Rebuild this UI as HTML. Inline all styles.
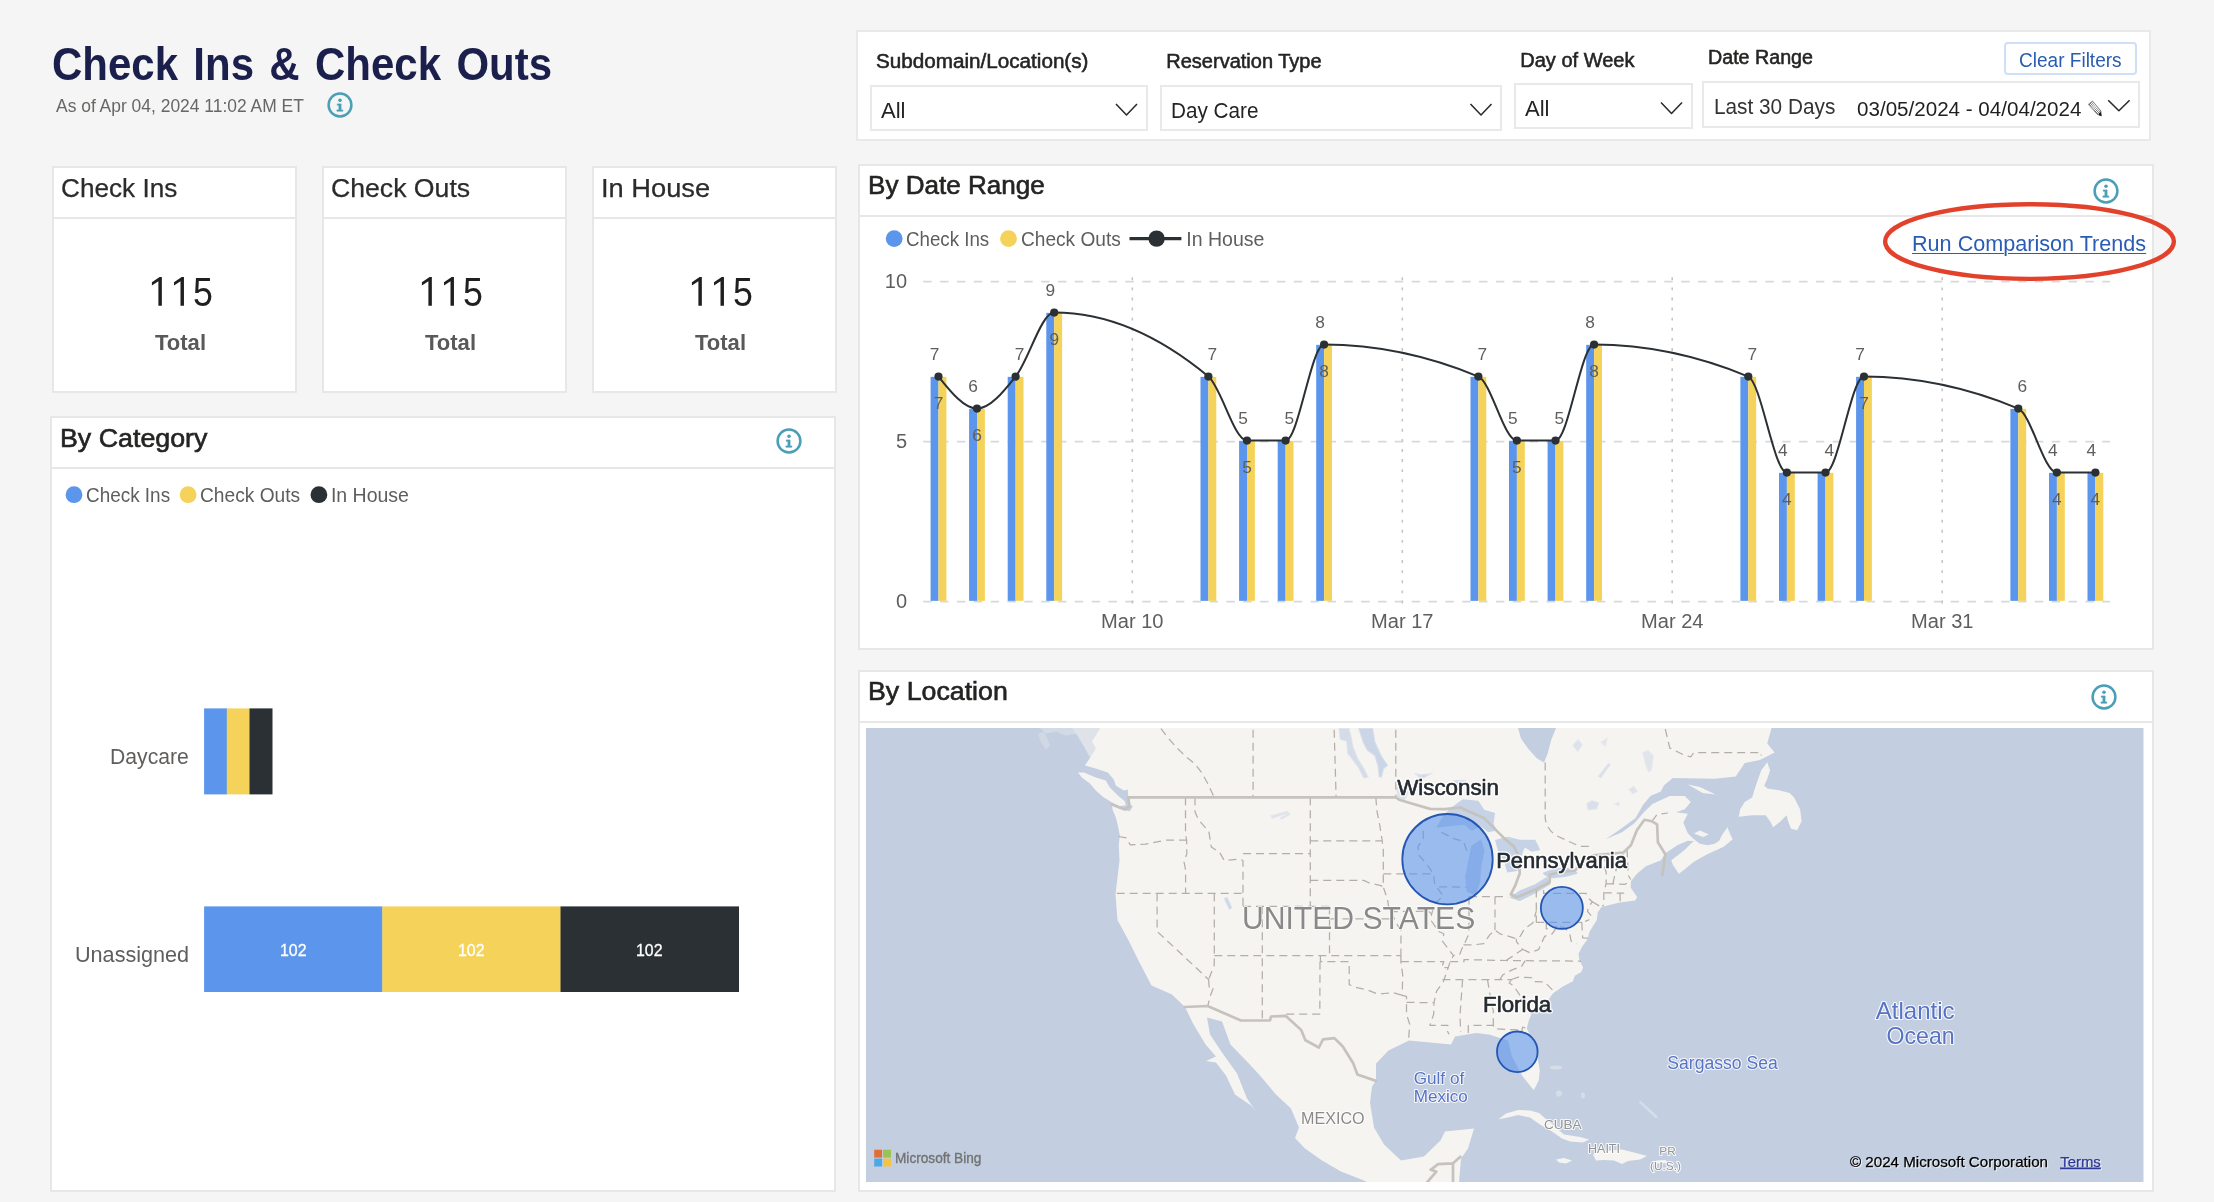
<!DOCTYPE html>
<html><head><meta charset="utf-8"><title>Check Ins &amp; Check Outs</title>
<style>
html,body{margin:0;padding:0;}
body{width:2214px;height:1202px;background:#f5f5f5;position:relative;overflow:hidden;font-family:"Liberation Sans",sans-serif;}
#root{position:absolute;left:0;top:0;width:2214px;height:1202px;will-change:transform;}
.t{position:absolute;white-space:nowrap;transform-origin:0 50%;}
.p{position:absolute;background:#fff;border:2px solid #e7e7e7;box-sizing:border-box;}
.hl{position:absolute;background:#e7e7e7;height:2px;}
svg{position:absolute;overflow:visible;}
</style></head>
<body>
<div id="root">
<span class="t" style="left:52.2px;top:42.2px;font-size:45.3px;line-height:45.3px;color:#1b1f4b;font-weight:bold;transform:scaleX(0.9266);word-spacing:4px;">Check Ins &amp; Check Outs</span>
<span class="t" style="left:56.3px;top:96.7px;font-size:18.2px;line-height:18.2px;color:#696765;transform:scaleX(0.9588);">As of Apr 04, 2024 11:02 AM ET</span>
<svg style="left:326.3px;top:90.5px" width="28" height="28" viewBox="-14 -14 28 28"><circle cx="0" cy="0" r="11.4" fill="none" stroke="#4a9fb6" stroke-width="2.5"/><circle cx="0" cy="-4.7" r="1.75" fill="#4a9fb6"/><path d="M-2.7 -1.1 H1.1 V4.9 H2.8 V6.2 H-3.1 V4.9 H-1.1 V0.3 H-2.7 Z" fill="#4a9fb6" stroke="#4a9fb6" stroke-width="0.6" stroke-linejoin="round"/></svg>
<div class="p" style="left:52px;top:166px;width:245px;height:227px"></div><div class="hl" style="left:54px;top:217px;width:241px"></div>
<span class="t" style="left:61.2px;top:174.5px;font-size:26px;line-height:26px;color:#2b2b2b;-webkit-text-stroke:0.25px #2b2b2b;transform:scaleX(1.0060);">Check Ins</span>
<svg style="left:0;top:0" width="900" height="400"><path d="M161.85 277.0 L161.85 305.85 L158.40 305.85 L158.40 281.30 L151.90 285.40 L151.90 282.30 L159.60 277.0 Z M183.95 277.0 L183.95 305.85 L180.50 305.85 L180.50 281.30 L174.00 285.40 L174.00 282.30 L181.70 277.0 Z" fill="#1f1f1f"/></svg>
<span class="t" style="left:193.0px;top:271.6px;font-size:41.3px;line-height:41.3px;color:#1f1f1f;transform:scaleX(0.8664);">5</span>
<span class="t" style="left:155.0px;top:331.8px;font-size:22.5px;line-height:22.5px;color:#595959;font-weight:bold;transform:scaleX(0.9794);">Total</span>
<div class="p" style="left:322px;top:166px;width:245px;height:227px"></div><div class="hl" style="left:324px;top:217px;width:241px"></div>
<span class="t" style="left:331.2px;top:174.5px;font-size:26px;line-height:26px;color:#2b2b2b;-webkit-text-stroke:0.25px #2b2b2b;transform:scaleX(1.0241);">Check Outs</span>
<svg style="left:0;top:0" width="900" height="400"><path d="M431.85 277.0 L431.85 305.85 L428.40 305.85 L428.40 281.30 L421.90 285.40 L421.90 282.30 L429.60 277.0 Z M453.95 277.0 L453.95 305.85 L450.50 305.85 L450.50 281.30 L444.00 285.40 L444.00 282.30 L451.70 277.0 Z" fill="#1f1f1f"/></svg>
<span class="t" style="left:463.0px;top:271.6px;font-size:41.3px;line-height:41.3px;color:#1f1f1f;transform:scaleX(0.8664);">5</span>
<span class="t" style="left:425.0px;top:331.8px;font-size:22.5px;line-height:22.5px;color:#595959;font-weight:bold;transform:scaleX(0.9794);">Total</span>
<div class="p" style="left:592px;top:166px;width:245px;height:227px"></div><div class="hl" style="left:594px;top:217px;width:241px"></div>
<span class="t" style="left:601.2px;top:174.5px;font-size:26px;line-height:26px;color:#2b2b2b;-webkit-text-stroke:0.25px #2b2b2b;transform:scaleX(1.0484);">In House</span>
<svg style="left:0;top:0" width="900" height="400"><path d="M701.85 277.0 L701.85 305.85 L698.40 305.85 L698.40 281.30 L691.90 285.40 L691.90 282.30 L699.60 277.0 Z M723.95 277.0 L723.95 305.85 L720.50 305.85 L720.50 281.30 L714.00 285.40 L714.00 282.30 L721.70 277.0 Z" fill="#1f1f1f"/></svg>
<span class="t" style="left:733.0px;top:271.6px;font-size:41.3px;line-height:41.3px;color:#1f1f1f;transform:scaleX(0.8664);">5</span>
<span class="t" style="left:695.0px;top:331.8px;font-size:22.5px;line-height:22.5px;color:#595959;font-weight:bold;transform:scaleX(0.9794);">Total</span>
<div class="p" style="left:50px;top:416px;width:786px;height:776px"></div><div class="hl" style="left:52px;top:467px;width:782px"></div>
<span class="t" style="left:60.2px;top:425.9px;font-size:25.5px;line-height:25.5px;color:#252423;-webkit-text-stroke:0.6px #252423;transform:scaleX(1.0505);">By Category</span>
<svg style="left:775.3px;top:426.7px" width="28" height="28" viewBox="-14 -14 28 28"><circle cx="0" cy="0" r="11.4" fill="none" stroke="#4a9fb6" stroke-width="2.5"/><circle cx="0" cy="-4.7" r="1.75" fill="#4a9fb6"/><path d="M-2.7 -1.1 H1.1 V4.9 H2.8 V6.2 H-3.1 V4.9 H-1.1 V0.3 H-2.7 Z" fill="#4a9fb6" stroke="#4a9fb6" stroke-width="0.6" stroke-linejoin="round"/></svg>
<svg style="left:0;top:0" width="900" height="1202"><circle cx="74" cy="494.7" r="8.4" fill="#5b95ec"/><circle cx="188.1" cy="494.7" r="8.4" fill="#f5d35a"/><circle cx="318.9" cy="494.7" r="8.4" fill="#2b3034"/><rect x="204.1" y="708.4" width="23.0" height="86" fill="#5b95ec"/><rect x="226.8" y="708.4" width="23.0" height="86" fill="#f5d35a"/><rect x="249.5" y="708.4" width="23.0" height="86" fill="#2b3034"/><rect x="204.1" y="906.4" width="178.5" height="85.6" fill="#5b95ec"/><rect x="382.3" y="906.4" width="178.5" height="85.6" fill="#f5d35a"/><rect x="560.5" y="906.4" width="178.5" height="85.6" fill="#2b3034"/></svg>
<span class="t" style="left:86.0px;top:485.6px;font-size:19.5px;line-height:19.5px;color:#605e5c;transform:scaleX(0.9700);">Check Ins</span>
<span class="t" style="left:200.1px;top:485.6px;font-size:19.5px;line-height:19.5px;color:#605e5c;transform:scaleX(0.9827);">Check Outs</span>
<span class="t" style="left:330.9px;top:485.6px;font-size:19.5px;line-height:19.5px;color:#605e5c;">In House</span>
<span class="t" style="left:110.0px;top:746.0px;font-size:22px;line-height:22px;color:#605e5c;transform:scaleX(0.9619);">Daycare</span>
<span class="t" style="left:74.7px;top:944.0px;font-size:22px;line-height:22px;color:#605e5c;transform:scaleX(0.9821);">Unassigned</span>
<span class="t" style="left:279.6px;top:941.5px;font-size:16.5px;line-height:16.5px;color:#fff;-webkit-text-stroke:0.3px #fff;transform:scaleX(0.9627);">102</span>
<span class="t" style="left:457.8px;top:941.5px;font-size:16.5px;line-height:16.5px;color:#fff;-webkit-text-stroke:0.3px #fff;transform:scaleX(0.9627);">102</span>
<span class="t" style="left:636.0px;top:941.5px;font-size:16.5px;line-height:16.5px;color:#fff;-webkit-text-stroke:0.3px #fff;transform:scaleX(0.9627);">102</span>
<div class="p" style="left:856px;top:30px;width:1294.5px;height:110.5px;border-color:#e9e9e9"></div>
<span class="t" style="left:875.9px;top:51.1px;font-size:20px;line-height:20px;color:#252423;-webkit-text-stroke:0.55px #252423;transform:scaleX(1.0330);">Subdomain/Location(s)</span>
<div class="p" style="left:870px;top:85px;width:278px;height:46px;border-color:#e9e9e9"></div>
<span class="t" style="left:881.2px;top:100.0px;font-size:22.5px;line-height:22.5px;color:#252423;transform:scaleX(0.9797);">All</span>
<svg style="left:0;top:0" width="2214" height="160"><path d="M1116 104 L1126.5 115 L1137 104" fill="none" stroke="#2b2b2b" stroke-width="1.55" stroke-linecap="butt" stroke-linejoin="round"/></svg>
<span class="t" style="left:1166.3px;top:51.1px;font-size:20px;line-height:20px;color:#252423;-webkit-text-stroke:0.55px #252423;">Reservation Type</span>
<div class="p" style="left:1160px;top:85px;width:342px;height:46px;border-color:#e9e9e9"></div>
<span class="t" style="left:1171.0px;top:100.0px;font-size:22.5px;line-height:22.5px;color:#252423;transform:scaleX(0.9208);">Day Care</span>
<svg style="left:0;top:0" width="2214" height="160"><path d="M1470.5 104 L1481.0 115 L1491.5 104" fill="none" stroke="#2b2b2b" stroke-width="1.55" stroke-linecap="butt" stroke-linejoin="round"/></svg>
<span class="t" style="left:1520.3px;top:49.6px;font-size:20px;line-height:20px;color:#252423;-webkit-text-stroke:0.55px #252423;">Day of Week</span>
<div class="p" style="left:1514px;top:83px;width:179px;height:46px;border-color:#e9e9e9"></div>
<span class="t" style="left:1525.2px;top:97.7px;font-size:22.5px;line-height:22.5px;color:#252423;transform:scaleX(0.9797);">All</span>
<svg style="left:0;top:0" width="2214" height="160"><path d="M1661 102.5 L1671.5 113.5 L1682 102.5" fill="none" stroke="#2b2b2b" stroke-width="1.55" stroke-linecap="butt" stroke-linejoin="round"/></svg>
<span class="t" style="left:1708.0px;top:47.3px;font-size:20px;line-height:20px;color:#252423;-webkit-text-stroke:0.55px #252423;transform:scaleX(0.9835);">Date Range</span>
<div class="p" style="left:1702px;top:81px;width:438px;height:46.8px;border-color:#e9e9e9"></div>
<span class="t" style="left:1713.5px;top:96.1px;font-size:22.5px;line-height:22.5px;color:#333;transform:scaleX(0.9238);">Last 30 Days</span>
<span class="t" style="left:1856.6px;top:99.4px;font-size:20.3px;line-height:20.3px;color:#1f1f1f;transform:scaleX(1.0153);">03/05/2024 - 04/04/2024</span>
<svg style="left:2087px;top:100px" width="16" height="18" viewBox="0 0 16 18"><defs><pattern id="hz" width="1.5" height="1.5" patternUnits="userSpaceOnUse" patternTransform="rotate(40)"><rect width="1.5" height="1.5" fill="#fff"/><rect width="0.8" height="0.8" fill="#555"/></pattern></defs><path d="M1.3 4.3 L5.5 1.0 L13.8 10.8 L10 14.1 Z" fill="url(#hz)" stroke="#666" stroke-width="0.7" stroke-linejoin="round"/><path d="M10 14.1 L13.8 10.8 L14.4 16 Z" fill="#fff" stroke="#555" stroke-width="0.7" stroke-linejoin="round"/><path d="M12 13.2 L13.9 11.9 L14.4 16 L11.6 14.9 Z" fill="#111"/></svg>
<svg style="left:0;top:0" width="2214" height="160"><path d="M2108.2 100.2 L2118.8999999999996 110.8 L2129.6 100.2" fill="none" stroke="#2b2b2b" stroke-width="1.55" stroke-linecap="butt" stroke-linejoin="round"/></svg>
<div class="p" style="left:2004px;top:42px;width:133px;height:32.5px;border-color:#cfe0f6;border-radius:4px"></div>
<span class="t" style="left:2019.2px;top:49.8px;font-size:20.5px;line-height:20.5px;color:#2a5db0;transform:scaleX(0.9285);">Clear Filters</span>
<div class="p" style="left:858px;top:164px;width:1296px;height:486px"></div><div class="hl" style="left:860px;top:215px;width:1292px"></div>
<span class="t" style="left:868.3px;top:172.9px;font-size:25.5px;line-height:25.5px;color:#252423;-webkit-text-stroke:0.6px #252423;transform:scaleX(1.0223);">By Date Range</span>
<svg style="left:2092.0px;top:176.7px" width="28" height="28" viewBox="-14 -14 28 28"><circle cx="0" cy="0" r="11.4" fill="none" stroke="#4a9fb6" stroke-width="2.5"/><circle cx="0" cy="-4.7" r="1.75" fill="#4a9fb6"/><path d="M-2.7 -1.1 H1.1 V4.9 H2.8 V6.2 H-3.1 V4.9 H-1.1 V0.3 H-2.7 Z" fill="#4a9fb6" stroke="#4a9fb6" stroke-width="0.6" stroke-linejoin="round"/></svg>
<svg style="left:0;top:0" width="2214" height="660"><line x1="923.2" x2="2110" y1="601.7" y2="601.7" stroke="#d5d9de" stroke-width="1.7" stroke-dasharray="8.5 8.343"/><line x1="923.2" x2="2110" y1="441.7" y2="441.7" stroke="#d5d9de" stroke-width="1.7" stroke-dasharray="8.5 8.343"/><line x1="923.2" x2="2110" y1="281.7" y2="281.7" stroke="#d5d9de" stroke-width="1.7" stroke-dasharray="8.5 8.343"/><line x1="1132.3" x2="1132.3" y1="277.3" y2="603.6" stroke="#c6c6c6" stroke-width="1.6" stroke-dasharray="2.9 7.2"/><line x1="1402.3" x2="1402.3" y1="277.3" y2="603.6" stroke="#c6c6c6" stroke-width="1.6" stroke-dasharray="2.9 7.2"/><line x1="1672.2" x2="1672.2" y1="277.3" y2="603.6" stroke="#c6c6c6" stroke-width="1.6" stroke-dasharray="2.9 7.2"/><line x1="1942.2" x2="1942.2" y1="277.3" y2="603.6" stroke="#c6c6c6" stroke-width="1.6" stroke-dasharray="2.9 7.2"/><rect x="930.6" y="376.85" width="7.9" height="224.0" fill="#5b95ec"/><rect x="938.5" y="376.85" width="7.9" height="224.0" fill="#f5d35a"/><rect x="969.1" y="408.85" width="7.9" height="192.0" fill="#5b95ec"/><rect x="977.0" y="408.85" width="7.9" height="192.0" fill="#f5d35a"/><rect x="1007.7" y="376.85" width="7.9" height="224.0" fill="#5b95ec"/><rect x="1015.6" y="376.85" width="7.9" height="224.0" fill="#f5d35a"/><rect x="1046.3" y="312.85" width="7.9" height="288.0" fill="#5b95ec"/><rect x="1054.2" y="312.85" width="7.9" height="288.0" fill="#f5d35a"/><rect x="1200.5" y="376.85" width="7.9" height="224.0" fill="#5b95ec"/><rect x="1208.4" y="376.85" width="7.9" height="224.0" fill="#f5d35a"/><rect x="1239.1" y="440.85" width="7.9" height="160.0" fill="#5b95ec"/><rect x="1247.0" y="440.85" width="7.9" height="160.0" fill="#f5d35a"/><rect x="1277.7" y="440.85" width="7.9" height="160.0" fill="#5b95ec"/><rect x="1285.6" y="440.85" width="7.9" height="160.0" fill="#f5d35a"/><rect x="1316.2" y="344.85" width="7.9" height="256.0" fill="#5b95ec"/><rect x="1324.1" y="344.85" width="7.9" height="256.0" fill="#f5d35a"/><rect x="1470.5" y="376.85" width="7.9" height="224.0" fill="#5b95ec"/><rect x="1478.4" y="376.85" width="7.9" height="224.0" fill="#f5d35a"/><rect x="1509.0" y="440.85" width="7.9" height="160.0" fill="#5b95ec"/><rect x="1516.9" y="440.85" width="7.9" height="160.0" fill="#f5d35a"/><rect x="1547.6" y="440.85" width="7.9" height="160.0" fill="#5b95ec"/><rect x="1555.5" y="440.85" width="7.9" height="160.0" fill="#f5d35a"/><rect x="1586.2" y="344.85" width="7.9" height="256.0" fill="#5b95ec"/><rect x="1594.1" y="344.85" width="7.9" height="256.0" fill="#f5d35a"/><rect x="1740.4" y="376.85" width="7.9" height="224.0" fill="#5b95ec"/><rect x="1748.3" y="376.85" width="7.9" height="224.0" fill="#f5d35a"/><rect x="1779.0" y="472.85" width="7.9" height="128.0" fill="#5b95ec"/><rect x="1786.9" y="472.85" width="7.9" height="128.0" fill="#f5d35a"/><rect x="1817.6" y="472.85" width="7.9" height="128.0" fill="#5b95ec"/><rect x="1825.5" y="472.85" width="7.9" height="128.0" fill="#f5d35a"/><rect x="1856.1" y="376.85" width="7.9" height="224.0" fill="#5b95ec"/><rect x="1864.0" y="376.85" width="7.9" height="224.0" fill="#f5d35a"/><rect x="2010.4" y="408.85" width="7.9" height="192.0" fill="#5b95ec"/><rect x="2018.3" y="408.85" width="7.9" height="192.0" fill="#f5d35a"/><rect x="2049.0" y="472.85" width="7.9" height="128.0" fill="#5b95ec"/><rect x="2056.9" y="472.85" width="7.9" height="128.0" fill="#f5d35a"/><rect x="2087.5" y="472.85" width="7.9" height="128.0" fill="#5b95ec"/><rect x="2095.4" y="472.85" width="7.9" height="128.0" fill="#f5d35a"/><path d="M938.5,376.6C951.3,392.6,964.2,408.6,977.0,408.6C989.9,408.6,1002.8,392.6,1015.6,376.6C1028.5,360.6,1041.3,312.6,1054.2,312.6C1105.6,312.6,1157.0,333.9,1208.4,376.6C1221.3,387.3,1234.1,440.6,1247.0,440.6C1259.8,440.6,1272.7,440.6,1285.6,440.6C1298.4,440.6,1311.3,344.6,1324.1,344.6C1375.5,344.6,1427.0,355.3,1478.4,376.6C1491.2,381.9,1504.1,440.6,1516.9,440.6C1529.8,440.6,1542.7,440.6,1555.5,440.6C1568.4,440.6,1581.2,344.6,1594.1,344.6C1645.5,344.6,1696.9,355.3,1748.3,376.6C1761.2,381.9,1774.0,472.6,1786.9,472.6C1799.8,472.6,1812.6,472.6,1825.5,472.6C1838.3,472.6,1851.2,376.6,1864.0,376.6C1915.5,376.6,1966.9,387.3,2018.3,408.6C2031.1,413.9,2044.0,472.6,2056.9,472.6C2069.7,472.6,2082.6,472.6,2095.4,472.6" fill="none" stroke="#2b3034" stroke-width="2"/><circle cx="938.5" cy="376.6" r="4.1" fill="#2b3034"/><circle cx="977.0" cy="408.6" r="4.1" fill="#2b3034"/><circle cx="1015.6" cy="376.6" r="4.1" fill="#2b3034"/><circle cx="1054.2" cy="312.6" r="4.1" fill="#2b3034"/><circle cx="1208.4" cy="376.6" r="4.1" fill="#2b3034"/><circle cx="1247.0" cy="440.6" r="4.1" fill="#2b3034"/><circle cx="1285.6" cy="440.6" r="4.1" fill="#2b3034"/><circle cx="1324.1" cy="344.6" r="4.1" fill="#2b3034"/><circle cx="1478.4" cy="376.6" r="4.1" fill="#2b3034"/><circle cx="1516.9" cy="440.6" r="4.1" fill="#2b3034"/><circle cx="1555.5" cy="440.6" r="4.1" fill="#2b3034"/><circle cx="1594.1" cy="344.6" r="4.1" fill="#2b3034"/><circle cx="1748.3" cy="376.6" r="4.1" fill="#2b3034"/><circle cx="1786.9" cy="472.6" r="4.1" fill="#2b3034"/><circle cx="1825.5" cy="472.6" r="4.1" fill="#2b3034"/><circle cx="1864.0" cy="376.6" r="4.1" fill="#2b3034"/><circle cx="2018.3" cy="408.6" r="4.1" fill="#2b3034"/><circle cx="2056.9" cy="472.6" r="4.1" fill="#2b3034"/><circle cx="2095.4" cy="472.6" r="4.1" fill="#2b3034"/><circle cx="894.2" cy="238.6" r="8.4" fill="#5b95ec"/><circle cx="1008.5" cy="238.6" r="8.4" fill="#f5d35a"/><line x1="1129.5" x2="1181.4" y1="238.6" y2="238.6" stroke="#2b3034" stroke-width="3.4"/><circle cx="1156.6" cy="238.6" r="8.2" fill="#2b3034"/><ellipse cx="2029.5" cy="241.6" rx="144.4" ry="37.3" fill="none" stroke="#e2412b" stroke-width="4.4"/></svg>
<span class="t" style="left:906.1px;top:229.8px;font-size:19.5px;line-height:19.5px;color:#605e5c;transform:scaleX(0.9596);">Check Ins</span>
<span class="t" style="left:1020.5px;top:229.8px;font-size:19.5px;line-height:19.5px;color:#605e5c;transform:scaleX(0.9797);">Check Outs</span>
<span class="t" style="left:1186.3px;top:229.8px;font-size:19.5px;line-height:19.5px;color:#605e5c;">In House</span>
<span class="t" style="left:1911.9px;top:232.7px;font-size:22.2px;line-height:22.2px;color:#2a5cb5;transform:scaleX(0.9737);text-decoration:underline;text-decoration-thickness:1.3px;text-underline-offset:1.6px;">Run Comparison Trends</span>
<span class="t" style="left:895.9px;top:591.1px;font-size:20px;line-height:20px;color:#605e5c;">0</span>
<span class="t" style="left:895.9px;top:431.1px;font-size:20px;line-height:20px;color:#605e5c;">5</span>
<span class="t" style="left:884.8px;top:271.1px;font-size:20px;line-height:20px;color:#605e5c;">10</span>
<span class="t" style="left:1101.0px;top:611.8px;font-size:19.5px;line-height:19.5px;color:#605e5c;transform:scaleX(1.0299);">Mar 10</span>
<span class="t" style="left:1371.0px;top:611.8px;font-size:19.5px;line-height:19.5px;color:#605e5c;transform:scaleX(1.0299);">Mar 17</span>
<span class="t" style="left:1641.0px;top:611.8px;font-size:19.5px;line-height:19.5px;color:#605e5c;transform:scaleX(1.0299);">Mar 24</span>
<span class="t" style="left:1910.9px;top:611.8px;font-size:19.5px;line-height:19.5px;color:#605e5c;transform:scaleX(1.0299);">Mar 31</span>
<span class="t" style="left:929.7px;top:346.3px;font-size:17.3px;line-height:17.3px;color:#605e5c;">7</span>
<span class="t" style="left:933.7px;top:394.8px;font-size:17.3px;line-height:17.3px;color:#605e5c;">7</span>
<span class="t" style="left:968.2px;top:378.3px;font-size:17.3px;line-height:17.3px;color:#605e5c;">6</span>
<span class="t" style="left:972.2px;top:426.8px;font-size:17.3px;line-height:17.3px;color:#605e5c;">6</span>
<span class="t" style="left:1014.7px;top:346.3px;font-size:17.3px;line-height:17.3px;color:#605e5c;">7</span>
<span class="t" style="left:1045.4px;top:282.3px;font-size:17.3px;line-height:17.3px;color:#605e5c;">9</span>
<span class="t" style="left:1049.4px;top:330.8px;font-size:17.3px;line-height:17.3px;color:#605e5c;">9</span>
<span class="t" style="left:1207.5px;top:346.3px;font-size:17.3px;line-height:17.3px;color:#605e5c;">7</span>
<span class="t" style="left:1238.2px;top:410.3px;font-size:17.3px;line-height:17.3px;color:#605e5c;">5</span>
<span class="t" style="left:1242.2px;top:458.8px;font-size:17.3px;line-height:17.3px;color:#605e5c;">5</span>
<span class="t" style="left:1284.6px;top:410.3px;font-size:17.3px;line-height:17.3px;color:#605e5c;">5</span>
<span class="t" style="left:1315.3px;top:314.3px;font-size:17.3px;line-height:17.3px;color:#605e5c;">8</span>
<span class="t" style="left:1319.3px;top:362.8px;font-size:17.3px;line-height:17.3px;color:#605e5c;">8</span>
<span class="t" style="left:1477.5px;top:346.3px;font-size:17.3px;line-height:17.3px;color:#605e5c;">7</span>
<span class="t" style="left:1508.1px;top:410.3px;font-size:17.3px;line-height:17.3px;color:#605e5c;">5</span>
<span class="t" style="left:1512.1px;top:458.8px;font-size:17.3px;line-height:17.3px;color:#605e5c;">5</span>
<span class="t" style="left:1554.6px;top:410.3px;font-size:17.3px;line-height:17.3px;color:#605e5c;">5</span>
<span class="t" style="left:1585.3px;top:314.3px;font-size:17.3px;line-height:17.3px;color:#605e5c;">8</span>
<span class="t" style="left:1589.3px;top:362.8px;font-size:17.3px;line-height:17.3px;color:#605e5c;">8</span>
<span class="t" style="left:1747.4px;top:346.3px;font-size:17.3px;line-height:17.3px;color:#605e5c;">7</span>
<span class="t" style="left:1778.1px;top:442.3px;font-size:17.3px;line-height:17.3px;color:#605e5c;">4</span>
<span class="t" style="left:1782.1px;top:490.8px;font-size:17.3px;line-height:17.3px;color:#605e5c;">4</span>
<span class="t" style="left:1824.6px;top:442.3px;font-size:17.3px;line-height:17.3px;color:#605e5c;">4</span>
<span class="t" style="left:1855.2px;top:346.3px;font-size:17.3px;line-height:17.3px;color:#605e5c;">7</span>
<span class="t" style="left:1859.2px;top:394.8px;font-size:17.3px;line-height:17.3px;color:#605e5c;">7</span>
<span class="t" style="left:2017.4px;top:378.3px;font-size:17.3px;line-height:17.3px;color:#605e5c;">6</span>
<span class="t" style="left:2048.0px;top:442.3px;font-size:17.3px;line-height:17.3px;color:#605e5c;">4</span>
<span class="t" style="left:2052.0px;top:490.8px;font-size:17.3px;line-height:17.3px;color:#605e5c;">4</span>
<span class="t" style="left:2086.6px;top:442.3px;font-size:17.3px;line-height:17.3px;color:#605e5c;">4</span>
<span class="t" style="left:2090.6px;top:490.8px;font-size:17.3px;line-height:17.3px;color:#605e5c;">4</span>
<div class="p" style="left:858px;top:670px;width:1296px;height:522px"></div><div class="hl" style="left:860px;top:721px;width:1292px"></div>
<span class="t" style="left:867.7px;top:679.4px;font-size:25.5px;line-height:25.5px;color:#252423;-webkit-text-stroke:0.6px #252423;transform:scaleX(1.0491);">By Location</span>
<svg style="left:2089.9px;top:682.5px" width="28" height="28" viewBox="-14 -14 28 28"><circle cx="0" cy="0" r="11.4" fill="none" stroke="#4a9fb6" stroke-width="2.5"/><circle cx="0" cy="-4.7" r="1.75" fill="#4a9fb6"/><path d="M-2.7 -1.1 H1.1 V4.9 H2.8 V6.2 H-3.1 V4.9 H-1.1 V0.3 H-2.7 Z" fill="#4a9fb6" stroke="#4a9fb6" stroke-width="0.6" stroke-linejoin="round"/></svg>
<svg style="left:866px;top:727.5px;overflow:hidden" width="1277.5" height="454.5" viewBox="866 727.5 1277.5 454.5" font-family="Liberation Sans, sans-serif"><rect x="866" y="727.5" width="1277.5" height="454.5" fill="#c3cfe1"/><path d="M1100.0 727.5 L1518.0 727.5 L1521.0 738.0 L1528.0 748.0 L1537.0 758.0 L1544.0 762.0 L1548.0 752.0 L1551.0 740.0 L1556.0 727.5 L1771.6 727.5 L1767.2 743.0 L1774.6 752.0 L1759.7 759.4 L1744.7 762.4 L1735.7 775.9 L1714.7 778.2 L1672.8 777.4 L1663.8 784.9 L1660.9 790.9 L1650.4 795.4 L1642.9 804.4 L1635.4 817.8 L1618.9 829.8 L1605.5 838.8 L1621.9 831.8 L1634.4 822.8 L1643.4 812.3 L1652.4 803.4 L1669.8 795.4 L1684.8 795.4 L1690.8 801.4 L1684.8 808.8 L1675.8 811.8 L1687.8 813.3 L1683.3 822.3 L1687.8 832.8 L1693.0 838.0 L1699.8 843.3 L1707.3 844.8 L1714.7 843.3 L1719.2 840.3 L1722.2 834.3 L1727.5 826.8 L1729.7 832.8 L1732.7 838.8 L1723.7 846.3 L1707.3 853.8 L1693.8 861.2 L1684.8 868.7 L1678.8 873.2 L1672.8 864.2 L1671.3 859.7 L1677.3 855.3 L1684.8 849.3 L1690.8 843.3 L1694.0 840.5 L1687.8 840.3 L1677.3 844.8 L1666.1 852.3 L1660.9 859.7 L1645.9 865.7 L1636.9 873.2 L1630.9 880.7 L1630.7 887.3 L1637.1 896.5 L1635.2 900.1 L1619.7 902.0 L1601.4 906.5 L1597.7 912.0 L1596.8 919.4 L1589.5 931.2 L1587.7 938.6 L1582.2 945.9 L1578.5 953.2 L1579.4 959.6 L1583.1 966.9 L1581.3 971.5 L1574.8 975.2 L1573.0 980.7 L1562.8 986.0 L1552.8 993.0 L1547.8 1000.0 L1539.8 1008.9 L1531.8 1012.9 L1528.8 1019.9 L1526.8 1027.9 L1529.8 1033.9 L1535.8 1043.9 L1537.8 1057.8 L1539.8 1069.8 L1538.8 1079.8 L1533.8 1089.8 L1522.0 1075.0 L1512.0 1056.0 L1508.0 1040.0 L1489.0 1034.0 L1476.0 1032.5 L1455.0 1036.0 L1451.0 1044.0 L1430.0 1042.0 L1409.0 1040.0 L1388.5 1050.0 L1376.0 1063.0 L1376.0 1080.0 L1372.0 1086.0 L1370.0 1102.0 L1374.0 1127.0 L1384.0 1144.0 L1401.0 1160.0 L1424.0 1156.0 L1440.5 1140.0 L1445.0 1131.0 L1474.0 1128.0 L1468.0 1148.0 L1461.0 1158.0 L1459.0 1182.0 L1368.0 1182.0 L1361.5 1179.0 L1341.0 1171.0 L1322.0 1160.0 L1305.0 1148.0 L1295.0 1137.5 L1299.0 1127.0 L1291.0 1108.0 L1276.0 1094.0 L1260.0 1075.0 L1247.0 1061.0 L1230.5 1044.0 L1222.0 1021.0 L1207.0 1017.0 L1210.0 1034.0 L1222.0 1052.0 L1237.0 1073.0 L1247.0 1098.0 L1255.5 1110.5 L1251.0 1105.0 L1235.0 1094.0 L1226.0 1075.0 L1216.0 1062.0 L1206.0 1060.6 L1216.0 1056.0 L1205.6 1044.0 L1193.0 1023.0 L1185.0 1006.5 L1172.0 994.0 L1151.5 985.0 L1139.0 961.0 L1128.6 940.0 L1117.5 919.6 L1115.5 894.0 L1119.5 860.0 L1118.8 844.8 L1119.8 834.8 L1117.8 824.8 L1115.8 816.8 L1112.8 809.8 L1111.8 804.8 L1124.8 809.8 L1129.8 810.8 L1132.8 805.8 L1129.8 803.8 L1128.3 796.9 L1127.8 788.9 L1123.8 789.9 L1115.8 784.9 L1113.8 778.9 L1107.8 771.9 L1095.8 767.9 L1084.9 764.9 L1089.9 757.9 L1095.8 748.0 L1091.9 741.0 L1095.8 735.0 Z" fill="#f6f4f1"/><path d="M1077.9 771.9 L1083.9 771.9 L1095.8 776.9 L1105.8 779.9 L1109.8 786.9 L1117.8 794.9 L1124.8 800.8 L1125.8 804.8 L1119.8 805.8 L1111.8 801.8 L1103.8 796.9 L1095.8 789.9 L1089.9 782.9 L1081.9 776.9 Z" fill="#f6f4f1"/><path d="M1738.7 816.3 L1740.2 808.8 L1744.7 801.4 L1752.2 796.9 L1754.4 789.4 L1757.4 780.4 L1761.2 769.9 L1767.2 761.7 L1770.1 770.0 L1767.0 779.0 L1764.2 784.9 L1767.2 787.9 L1777.6 789.4 L1789.6 792.4 L1794.1 796.9 L1797.1 802.9 L1800.1 808.8 L1801.6 820.8 L1797.1 829.8 L1791.1 828.3 L1788.1 820.8 L1786.6 814.8 L1780.6 820.8 L1773.1 826.8 L1770.1 820.8 L1765.7 814.8 L1752.2 814.8 Z" fill="#f6f4f1"/><path d="M1687.8 784.1 L1699.8 786.4 L1715.5 793.9 L1702.8 792.4 Z" fill="#f6f4f1"/><path d="M1694.0 833.0 L1700.0 830.0 L1708.8 834.0 L1703.0 836.5 Z" fill="#f6f4f1"/><path d="M1498.5 1118.8 L1506.0 1113.0 L1518.2 1109.5 L1530.0 1110.0 L1539.0 1112.6 L1550.0 1122.0 L1564.0 1134.0 L1580.0 1136.5 L1589.0 1139.0 L1583.0 1142.0 L1570.0 1141.0 L1562.0 1138.0 L1552.0 1131.0 L1540.0 1124.0 L1530.0 1117.0 L1518.0 1114.5 L1508.0 1117.0 Z" fill="#f6f4f1"/><path d="M1593.0 1154.0 L1600.0 1150.5 L1612.0 1150.0 L1622.0 1149.0 L1634.0 1152.0 L1647.0 1155.5 L1640.0 1159.0 L1628.0 1160.5 L1622.0 1163.5 L1614.0 1160.0 L1603.0 1159.5 L1596.0 1160.0 Z" fill="#f6f4f1"/><path d="M1556.0 1159.0 L1564.0 1157.5 L1572.0 1160.0 L1566.0 1163.0 L1559.0 1162.0 Z" fill="#f6f4f1"/><path d="M1656.0 1160.0 L1666.0 1159.5 L1667.0 1162.5 L1657.0 1163.0 Z" fill="#f6f4f1"/><g fill="#f6f4f1"><path d="M1100 727.5 L1072 727.5 L1078 736 L1084 746 L1090 757 L1086 764 L1096 768 L1096 748 L1092 741 L1096 735 Z" opacity="0.55"/><path d="M1040 727.5 L1072 727.5 L1076 733 L1066 735 L1056 731 L1046 733 Z" opacity="0.3"/><path d="M1038 733 L1044 731 L1050 745 L1046 749 L1041 742 Z" opacity="0.25"/></g><g fill="#f6f4f1" opacity="0.38"><ellipse cx="1556" cy="1067" rx="6" ry="2"/><ellipse cx="1559" cy="1093" rx="3" ry="3"/><ellipse cx="1583" cy="1095" rx="2" ry="3"/><path d="M1640 1100 L1658 1116 L1656 1118 L1639 1102 Z"/></g><path d="M1452.4 807.0 L1462.9 799.5 L1477.9 801.0 L1483.8 810.0 L1494.3 813.0 L1492.8 823.4 L1495.8 829.4 L1488.3 830.9 L1480.8 825.0 L1471.9 829.4 L1464.4 823.4 L1449.4 825.0 L1437.4 826.4 L1444.9 814.4 Z" fill="#c6d3e6" stroke="#c6d3e6" stroke-width="1.5" stroke-linejoin="round"/><path d="M1471.9 845.9 L1480.8 839.9 L1483.8 850.4 L1480.8 863.8 L1479.4 881.8 L1474.9 893.8 L1467.4 890.8 L1465.9 875.8 L1468.9 860.8 Z" fill="#c6d3e6" stroke="#c6d3e6" stroke-width="1.5" stroke-linejoin="round"/><path d="M1495.8 839.9 L1507.8 836.9 L1519.8 839.9 L1534.7 839.9 L1539.2 848.9 L1531.7 850.4 L1524.3 845.9 L1519.8 857.9 L1516.8 869.8 L1507.8 871.3 L1504.8 860.8 L1498.8 850.4 Z" fill="#c6d3e6" stroke="#c6d3e6" stroke-width="1.5" stroke-linejoin="round"/><path d="M1510.8 896.8 L1519.8 890.8 L1534.7 884.8 L1546.7 877.3 L1549.7 883.3 L1534.7 892.3 L1519.8 899.8 Z" fill="#c6d3e6" stroke="#c6d3e6" stroke-width="1.5" stroke-linejoin="round"/><path d="M1543.7 872.8 L1555.7 868.3 L1572.2 868.3 L1576.7 872.8 L1564.7 875.8 L1549.7 877.3 Z" fill="#c6d3e6" stroke="#c6d3e6" stroke-width="1.5" stroke-linejoin="round"/><g fill="#c6d3e6" stroke="#f6f4f1" stroke-opacity="0.35" stroke-width="2"><path d="M1358.0 727.5 L1373.2 727.5 L1375.4 741.3 L1381.9 755.4 L1388.4 765.1 L1384.1 768.4 L1381.9 777.0 L1378.6 777.0 L1377.6 766.2 L1374.3 755.4 L1366.7 749.9 L1362.4 741.3 Z" opacity="0.9"/><path d="M1338.5 727.5 L1349.4 727.5 L1351.5 735.8 L1353.7 746.7 L1358.0 757.5 L1364.6 768.4 L1368.9 777.0 L1363.5 778.1 L1358.0 767.3 L1351.5 758.6 L1347.2 753.2 L1346.1 741.3 L1339.6 739.1 Z" opacity="0.7"/><path d="M1413.3 772.2 L1420.9 773.8 L1429.6 772.7 L1433.9 772.2 L1425.3 777 L1420.9 780.3 L1417.7 776 Z" opacity="0.7"/><path d="M1396 786 L1404 784 L1409 792 L1405 800 L1397 797 Z" opacity="0.55"/><path d="M1453.4 779.5 L1466.4 779.2 L1463 785.7 L1456 785.5 Z" opacity="0.8"/><path d="M1280 817 L1289.8 811.7 L1290.5 814 L1281 819.5 Z" opacity="0.6"/><path d="M1270 815 L1288 810 L1289 813 L1272 818.5 Z" opacity="0.5"/><path d="M1223.5 897.5 L1227.5 896.5 L1232.5 907.5 L1229 909.5 Z" opacity="0.85"/><path d="M1642 752 L1648 749 L1654 755 L1652 770 L1648 772 L1645 764 Z" opacity="0.45"/><path d="M1597.5 776 L1608.5 762 L1611 764 L1601 778 Z" opacity="0.6"/><path d="M1586 803 L1592 799.5 L1599.5 802 L1597 809 L1588 810 Z" opacity="0.6"/><path d="M1628 789 L1634 785 L1638 791 L1633 794 Z" opacity="0.5"/><path d="M1613 803 L1620 801 L1619 806 Z" opacity="0.5"/><path d="M1572 745 L1578 738 L1583 744 L1578 752 Z" opacity="0.5"/><path d="M1600 742 L1608 736 L1606 747 Z" opacity="0.4"/></g><path d="M1118.6 836.0 L1126.3 837.4 L1130.2 844.3 L1145.5 843.6 L1160.9 840.6 L1166.7 839.5 L1186.6 839.5 M1185.5 796.8 L1185.5 833.5 L1186.6 839.5 L1186.8 853.2 L1184.0 861.3 L1185.6 869.3 L1185.6 892.9 M1116.7 892.9 L1243.0 892.9 M1157.1 892.9 L1157.1 930.9 L1208.6 979.0 M1208.6 979.0 L1209.2 987.2 L1213.4 987.2 L1209.9 996.4 L1207.8 1005.4 M1214.3 892.9 L1214.3 955.2 L1214.2 964.8 L1208.6 979.0 M1214.3 955.2 L1400.9 955.2 M1262.3 905.8 L1262.3 1021.1 M1195.0 796.8 L1195.0 811.3 L1198.4 819.2 L1208.9 831.1 L1211.3 846.4 L1219.5 851.8 L1224.3 860.0 L1238.7 858.6 L1243.0 860.0 L1243.0 905.8 M1243.0 853.2 L1310.3 853.2 M1243.0 905.8 L1329.5 905.8 M1310.3 796.8 L1310.3 905.8 M1329.5 905.8 L1329.5 955.2 M1310.3 840.3 L1382.2 840.3 M1310.3 879.9 L1363.6 879.9 L1369.4 882.5 L1380.9 885.1 L1383.3 886.4 M1329.5 918.4 L1394.4 918.4 M1320.4 955.2 L1320.4 961.2 L1349.2 961.2 L1349.2 984.1 L1356.9 987.2 L1367.5 989.5 L1376.1 993.0 L1383.8 993.0 L1393.4 992.2 L1402.2 994.8 M1320.0 961.2 L1319.8 1013.6 L1285.6 1013.6 L1286.5 1016.0 M1400.9 955.2 L1400.9 961.2 L1402.7 974.3 L1402.2 994.8 L1406.5 995.8 L1406.5 1001.9 L1406.5 1013.6 L1409.7 1023.7 L1408.8 1036.0 L1408.3 1039.3 M1400.9 961.2 L1443.8 961.2 L1441.7 967.2 L1448.2 967.2 M1406.5 1001.9 L1434.0 1002.2 M1375.8 796.8 L1377.1 811.3 L1379.9 825.5 L1382.2 840.3 L1383.3 849.1 L1383.3 873.3 L1383.3 886.4 L1387.6 899.4 L1389.1 909.6 L1394.4 918.4 L1398.2 925.9 L1401.0 929.6 L1400.9 955.2 M1383.3 873.3 L1433.5 873.3 M1389.8 911.1 L1428.6 910.7 L1431.6 913.6 M1423.2 830.3 L1423.3 838.1 L1417.9 846.4 L1418.9 854.6 L1427.0 864.0 L1433.5 873.3 L1434.7 883.8 L1443.3 895.5 L1434.7 903.2 L1431.6 913.6 L1430.9 919.7 L1438.5 930.9 L1443.8 933.3 L1442.4 940.7 L1449.1 949.2 L1453.4 955.2 L1450.1 961.2 L1448.2 967.2 L1443.3 981.3 L1436.6 990.6 L1434.0 1002.2 L1433.7 1013.6 L1429.9 1024.8 L1447.9 1024.8 L1447.2 1030.4 L1449.1 1033.8 M1441.4 831.8 L1453.9 838.1 L1463.5 840.9 L1466.4 849.1 L1468.3 851.8 M1439.1 886.4 L1466.4 886.6 M1469.0 896.0 L1469.0 927.1 L1468.3 934.6 L1464.5 943.1 L1463.5 944.3 L1459.7 954.0 L1453.4 955.2 M1469.0 896.0 L1495.2 896.0 L1508.2 896.4 M1495.0 896.0 L1495.0 929.6 M1463.5 944.3 L1474.1 944.3 L1483.7 943.1 L1489.5 934.6 L1495.0 929.6 L1500.0 933.3 L1506.8 935.2 L1516.4 938.2 L1520.2 935.8 L1524.5 928.4 L1533.0 922.2 L1536.3 910.3 M1536.3 889.1 L1536.3 921.9 M1536.3 921.9 L1581.8 921.9 M1543.6 889.4 L1543.6 892.9 L1586.0 892.9 L1588.9 898.1 L1592.3 901.2 L1588.4 907.0 L1587.5 910.8 L1591.8 915.9 L1588.4 919.7 L1585.1 920.9 M1592.3 901.2 L1599.9 905.8 M1605.2 853.1 L1604.7 866.7 L1606.2 872.0 L1606.1 883.2 L1603.8 892.3 L1603.9 904.5 L1602.3 905.8 M1606.1 883.2 L1624.9 883.8 L1629.7 881.6 M1603.8 892.3 L1620.1 892.7 L1624.2 892.7 M1620.1 892.7 L1620.1 901.9 M1612.9 883.4 L1615.3 872.0 L1617.7 864.0 L1622.5 858.6 L1623.0 853.2 M1627.0 849.1 L1627.8 862.6 L1628.1 874.6 L1630.7 879.0 M1450.1 961.2 L1464.0 961.2 L1464.0 959.1 L1506.0 960.0 L1525.2 960.2 L1581.0 960.6 M1506.0 960.0 L1511.6 956.4 L1522.1 949.2 L1522.4 948.7 L1516.4 941.1 L1516.4 938.2 M1522.4 948.7 L1529.8 952.2 L1538.5 949.2 L1544.7 935.8 L1552.2 933.3 L1557.2 925.9 L1563.2 926.9 L1565.8 928.4 L1569.0 931.7 L1569.8 933.3 L1571.1 940.7 L1576.9 943.1 M1546.3 921.9 L1546.3 928.4 L1557.2 925.9 M1581.8 921.9 L1582.7 937.5 L1588.9 937.6 M1442.4 979.0 L1462.6 979.0 L1487.5 979.2 L1499.8 979.1 L1511.5 979.0 M1499.8 979.1 L1502.9 974.3 L1511.6 969.6 L1521.6 965.8 L1525.2 960.2 M1462.6 979.0 L1460.0 1014.7 L1460.6 1031.5 M1487.5 979.2 L1491.6 1003.7 L1493.3 1010.2 L1493.3 1024.8 M1468.3 1032.6 L1468.3 1024.8 L1493.3 1024.8 L1494.6 1028.2 L1520.2 1029.6 L1521.6 1032.0 L1522.6 1026.7 L1526.9 1028.0 M1511.5 979.0 L1509.2 982.5 L1513.5 985.1 L1520.2 995.3 L1526.9 1002.2 L1530.8 1012.4 L1532.7 1013.2 M1511.5 979.0 L1518.3 976.6 L1531.3 977.2 L1532.4 977.8 L1533.8 981.1 L1544.5 981.3 L1555.3 992.3 M1157.1 716.3 L1157.1 722.8 L1166.7 735.7 L1176.3 746.8 L1185.9 756.1 L1195.5 763.9 L1202.2 773.0 L1208.0 783.5 L1214.1 796.8 M1253.1 716.3 L1253.1 796.8 M1333.8 716.3 L1336.1 796.8 M1395.8 716.3 L1395.8 790.9 L1395.8 796.8" fill="none" stroke="#b3aea8" stroke-width="1.25" stroke-dasharray="8 5" stroke-linejoin="round"/><path d="M1545.2 762 L1545.2 817.4 Q1546 828 1556 835 L1579.7 845.9 L1593.1 845.9 M1665.3 728.7 L1669.8 747.5 L1684.8 755 L1690.8 756.4 L1693.8 752 L1761.2 752 L1761.2 755 M1651.9 820.8 L1657 814 L1668 812.5" fill="none" stroke="#b3aea8" stroke-width="1.25" stroke-dasharray="8 5"/><path d="M1128.3 796.9 L1395.7 796.9 L1400.0 799.5 L1415.0 804.0 L1430.0 808.4 L1445.0 808.6 L1460.0 807.0 L1483.8 817.4 L1495.8 829.4 L1504.8 838.4 L1513.8 845.9 L1518.3 854.9 L1519.8 872.8 L1515.3 884.8 L1510.8 893.8 L1516.8 896.8 L1534.7 889.3 L1549.7 881.8 L1549.7 874.3 L1561.7 871.3 L1575.2 869.8 L1584.0 860.0 L1593.1 854.9 L1623.4 852.0 L1630.9 844.8 L1636.9 829.8 L1644.4 819.3 L1651.9 820.8 L1657.1 823.8 L1657.9 841.8 L1665.3 853.8 L1662.3 874.7" fill="none" stroke="#c6c2bd" stroke-width="2.7" stroke-linejoin="round" stroke-linecap="round"/><path d="M1128.3 796.9 L1129.5 806.0 L1124.8 809.0 L1111.8 804.0" fill="none" stroke="#c6c2bd" stroke-width="2.7" stroke-linejoin="round" stroke-linecap="round"/><path d="M1184.8 1006.5 L1207.6 1005.5 L1240.9 1020.0 L1270.0 1020.0 L1271.0 1016.0 L1285.6 1015.3 L1301.2 1029.4 L1305.4 1039.8 L1318.9 1047.0 L1323.0 1038.8 L1334.5 1037.7 L1342.8 1046.0 L1353.2 1062.7 L1357.4 1074.0 L1376.0 1080.4" fill="none" stroke="#c6c2bd" stroke-width="2.7" stroke-linejoin="round" stroke-linecap="round"/><path d="M1427.0 1182.0 L1436.3 1171.1 L1430.7 1169.3 L1438.1 1163.7 L1453.0 1162.8 L1460.4 1156.3 L1453.0 1162.8 L1453.0 1182.0" fill="none" stroke="#c6c2bd" stroke-width="2.7" stroke-linejoin="round" stroke-linecap="round"/><text x="1241.9" y="928.8" font-size="31.2" font-weight="normal" text-anchor="start" fill="#898989" stroke="#ffffff" stroke-opacity="0.85" stroke-width="1.6" stroke-linejoin="round" paint-order="stroke" textLength="233.4" lengthAdjust="spacingAndGlyphs">UNITED STATES</text><text x="1301.0" y="1123.7" font-size="16.2" font-weight="normal" text-anchor="start" fill="#8a8a8a" stroke="#ffffff" stroke-opacity="0.85" stroke-width="2" stroke-linejoin="round" paint-order="stroke" textLength="63.6" lengthAdjust="spacingAndGlyphs">MEXICO</text><text x="1544.0" y="1128.2" font-size="13.5" font-weight="normal" text-anchor="start" fill="#939393" stroke="#ffffff" stroke-opacity="0.85" stroke-width="2" stroke-linejoin="round" paint-order="stroke" textLength="37.6" lengthAdjust="spacingAndGlyphs">CUBA</text><text x="1588.0" y="1152.2" font-size="12.5" font-weight="normal" text-anchor="start" fill="#939393" stroke="#ffffff" stroke-opacity="0.85" stroke-width="2" stroke-linejoin="round" paint-order="stroke" textLength="32.0" lengthAdjust="spacingAndGlyphs">HAITI</text><text x="1667.5" y="1154.6" font-size="11.8" font-weight="normal" text-anchor="middle" fill="#959595" stroke="#ffffff" stroke-opacity="0.85" stroke-width="2" stroke-linejoin="round" paint-order="stroke">PR</text><text x="1665.5" y="1169.8" font-size="11.8" font-weight="normal" text-anchor="middle" fill="#959595" stroke="#ffffff" stroke-opacity="0.85" stroke-width="2" stroke-linejoin="round" paint-order="stroke">(U.S.)</text><text x="1875.7" y="1018.4" font-size="24" font-weight="normal" text-anchor="start" fill="#5872c4" stroke="#ffffff" stroke-opacity="0.85" stroke-width="2.2" stroke-linejoin="round" paint-order="stroke" textLength="78.9" lengthAdjust="spacingAndGlyphs">Atlantic</text><text x="1886.5" y="1043.4" font-size="24" font-weight="normal" text-anchor="start" fill="#5872c4" stroke="#ffffff" stroke-opacity="0.85" stroke-width="2.2" stroke-linejoin="round" paint-order="stroke" textLength="68.1" lengthAdjust="spacingAndGlyphs">Ocean</text><text x="1667.3" y="1068.8" font-size="17.6" font-weight="normal" text-anchor="start" fill="#5872c4" stroke="#ffffff" stroke-opacity="0.85" stroke-width="2" stroke-linejoin="round" paint-order="stroke" textLength="110.5" lengthAdjust="spacingAndGlyphs">Sargasso Sea</text><text x="1413.7" y="1083.8" font-size="17.1" font-weight="normal" text-anchor="start" fill="#5872c4" stroke="#ffffff" stroke-opacity="0.85" stroke-width="2" stroke-linejoin="round" paint-order="stroke" textLength="50.5" lengthAdjust="spacingAndGlyphs">Gulf of</text><text x="1413.7" y="1101.2" font-size="17.1" font-weight="normal" text-anchor="start" fill="#5872c4" stroke="#ffffff" stroke-opacity="0.85" stroke-width="2" stroke-linejoin="round" paint-order="stroke" textLength="54.1" lengthAdjust="spacingAndGlyphs">Mexico</text><circle cx="1447.5" cy="858.7" r="45.2" fill="#5b95ec" fill-opacity="0.6" stroke="#2456b4" stroke-width="1.8"/><circle cx="1561.85" cy="907.45" r="21.0" fill="#5b95ec" fill-opacity="0.6" stroke="#2456b4" stroke-width="1.8"/><circle cx="1517.3" cy="1051.3" r="20.3" fill="#5b95ec" fill-opacity="0.6" stroke="#2456b4" stroke-width="1.8"/><text x="1397.2" y="794.6" font-size="21.3" text-anchor="start" fill="#252b30" stroke="#ffffff" stroke-opacity="0.8" stroke-width="3.4" stroke-linejoin="round" textLength="101.8" lengthAdjust="spacingAndGlyphs">Wisconsin</text><text x="1397.2" y="794.6" font-size="21.3" text-anchor="start" fill="#252b30" stroke="#252b30" stroke-width="0.6" stroke-linejoin="round" textLength="101.8" lengthAdjust="spacingAndGlyphs">Wisconsin</text><text x="1496.2" y="867.4" font-size="21.3" text-anchor="start" fill="#252b30" stroke="#ffffff" stroke-opacity="0.8" stroke-width="3.4" stroke-linejoin="round" textLength="130.8" lengthAdjust="spacingAndGlyphs">Pennsylvania</text><text x="1496.2" y="867.4" font-size="21.3" text-anchor="start" fill="#252b30" stroke="#252b30" stroke-width="0.6" stroke-linejoin="round" textLength="130.8" lengthAdjust="spacingAndGlyphs">Pennsylvania</text><text x="1483.1" y="1011.2" font-size="21.3" text-anchor="start" fill="#252b30" stroke="#ffffff" stroke-opacity="0.8" stroke-width="3.4" stroke-linejoin="round" textLength="68.2" lengthAdjust="spacingAndGlyphs">Florida</text><text x="1483.1" y="1011.2" font-size="21.3" text-anchor="start" fill="#252b30" stroke="#252b30" stroke-width="0.6" stroke-linejoin="round" textLength="68.2" lengthAdjust="spacingAndGlyphs">Florida</text><g><rect x="874.2" y="1149.2" width="7.9" height="7.9" fill="#e26d36"/><rect x="883.1" y="1149.2" width="7.9" height="7.9" fill="#99c354"/><rect x="874.2" y="1158.1" width="7.9" height="7.9" fill="#4ea8e6"/><rect x="883.1" y="1158.1" width="7.9" height="7.9" fill="#f6c242"/></g><text x="895" y="1162.5" font-size="14.6" fill="#727272" stroke="#727272" stroke-width="0.35" textLength="86.4" lengthAdjust="spacingAndGlyphs">Microsoft Bing</text><text x="1850.9" y="1167.1000000000001" font-size="14.6" fill="#ffffff" stroke="#ffffff" stroke-width="0.25" opacity="0.75" textLength="198" lengthAdjust="spacingAndGlyphs">© 2024 Microsoft Corporation</text><text x="2061.1" y="1167.1000000000001" font-size="14.6" fill="#ffffff" stroke="#ffffff" stroke-width="0.25" opacity="0.75" textLength="40.6" lengthAdjust="spacingAndGlyphs" text-decoration="underline">Terms</text><text x="1850" y="1166.2" font-size="14.6" fill="#000" stroke="#000" stroke-width="0.25" textLength="198" lengthAdjust="spacingAndGlyphs">© 2024 Microsoft Corporation</text><text x="2060.2" y="1166.2" font-size="14.6" fill="#2d3a96" stroke="#2d3a96" stroke-width="0.25" textLength="40.6" lengthAdjust="spacingAndGlyphs" text-decoration="underline">Terms</text></svg>
</div>
</body></html>
